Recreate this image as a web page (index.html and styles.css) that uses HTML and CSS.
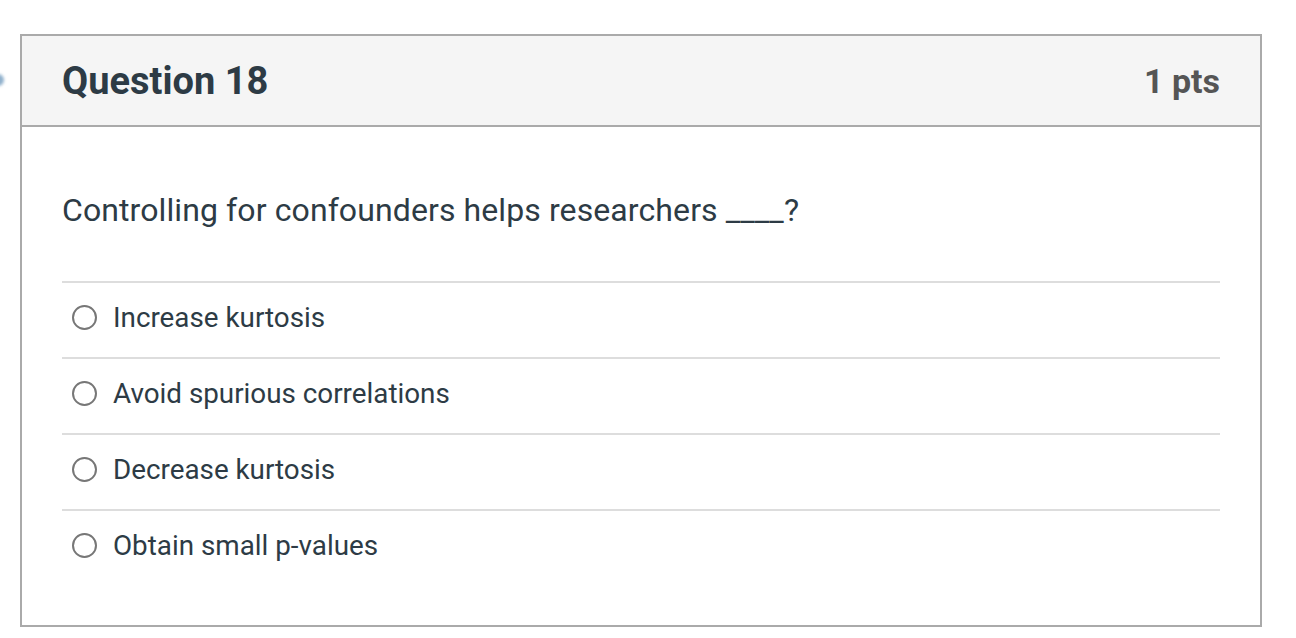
FILE: index.html
```html
<!DOCTYPE html>
<html lang="en">
<head>
    <meta charset="UTF-8">
    <meta name="viewport" content="width=device-width, initial-scale=1.0">
    <title>Question 18</title>
    <link rel="stylesheet" href="styles.css">
</head>
<body>
    <span class="nav-dot"></span>

    <div class="question">
        <div class="question-header">
            <h2>Question 18</h2>
            <span class="points">1 pts</span>
        </div>
        <div class="question-body">
            <p class="question-text">Controlling for confounders helps researchers ____?</p>
            <div class="answers">
                <label class="answer"><span class="radio"></span>Increase kurtosis</label>
                <label class="answer"><span class="radio"></span>Avoid spurious correlations</label>
                <label class="answer"><span class="radio"></span>Decrease kurtosis</label>
                <label class="answer"><span class="radio"></span>Obtain small p-values</label>
            </div>
        </div>
    </div>
</body>
</html>
```

FILE: styles.css
```css
body {
    font-family: Roboto, 'Helvetica Neue', Arial, sans-serif;
    background-color: white;
    color: #2d3b45;
    margin: 0;
    padding: 34px 34px 0 20px;
}
.nav-dot {
    position: absolute;
    left: -8px;
    top: 74px;
    width: 12px;
    height: 12px;
    border-radius: 50%;
    background: #8fb0cc;
    filter: blur(1.5px);
}
.question {
    border: 2px solid #aaaaaa;
    width: 1238px;
}
.question-header {
    display: flex;
    justify-content: space-between;
    align-items: center;
    background: #f5f5f5;
    border-bottom: 2px solid #aaaaaa;
    height: 89px;
    padding: 0 40px;
}
.question-header h2 {
    margin: 0;
    font-size: 38px;
    font-weight: bold;
    color: #2d3b45;
}
.points {
    font-size: 34px;
    font-weight: bold;
    color: #555555;
}
.question-body {
    padding: 63px 40px 40px;
}
.question-text {
    margin: 0 0 51px;
    font-size: 32px;
    letter-spacing: 0.1px;
    line-height: 40px;
}
.answer {
    display: flex;
    align-items: center;
    gap: 16px;
    box-sizing: border-box;
    height: 76px;
    padding: 0 10px 5px;
    border-top: 2px solid #dddddd;
    font-size: 27.8px;
}
.radio {
    width: 21px;
    height: 21px;
    border: 2px solid #777777;
    border-radius: 50%;
}
```
